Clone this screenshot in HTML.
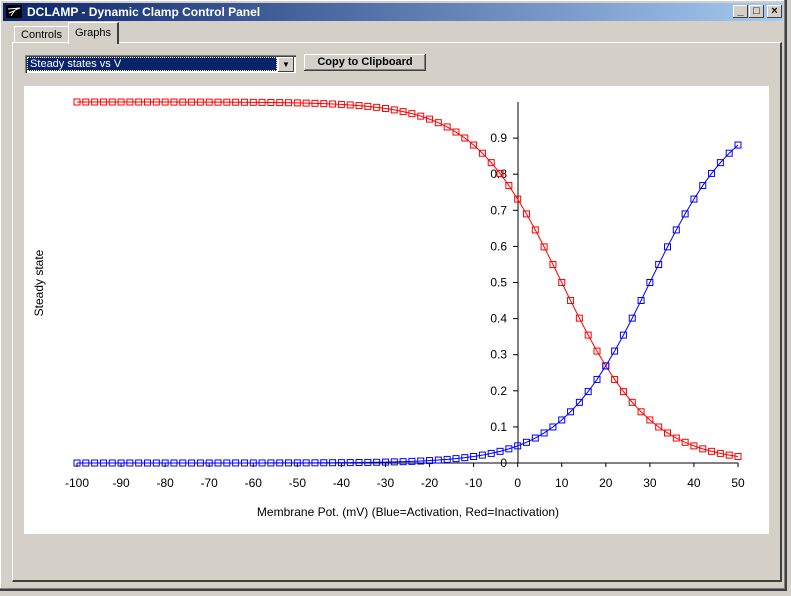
<!DOCTYPE html>
<html><head><meta charset="utf-8"><style>
body{margin:0;width:791px;height:596px;background:#d4d0c8;position:relative;overflow:hidden;font-family:"Liberation Sans",sans-serif;}
.abs{position:absolute}
#win{left:0;top:0;width:785px;height:589px;border-right:2px solid #404040;border-bottom:2px solid #404040;box-shadow:inset -1px -1px 0 #808080, inset 1px 1px 0 #fff;}
#title{left:3px;top:3px;width:780px;height:18px;background:linear-gradient(to right,#0a246a,#a6caf0);color:#fff;font-weight:bold;font-size:12px;line-height:18px;}
.tb{top:5px;width:15px;height:13px;background:#d4d0c8;box-shadow:inset -1px -1px 0 #404040,inset 1px 1px 0 #fff;font-size:11px;text-align:center;line-height:13px;color:#000;font-weight:bold}
#panel{left:12px;top:42px;width:767px;height:537px;border-left:1px solid #fff;border-top:1px solid #fff;border-right:2px solid #404040;border-bottom:2px solid #404040;}
.tab{font-size:11px;color:#000;}
</style></head><body>
<div id="win" class="abs"></div>
<div id="title" class="abs"><span style="position:absolute;left:3px;top:2px;width:16px;height:13px;background:#000"><svg width="16" height="13"><path d="M2 4 L14 3 L9 5 L5 11 M3 8 L8 6" stroke="#fff" fill="none"/></svg></span><span style="position:absolute;left:24px">DCLAMP - Dynamic Clamp Control Panel</span></div>
<div class="abs tb" style="left:733px">_</div>
<div class="abs tb" style="left:749px">□</div>
<div class="abs tb" style="left:767px">×</div>
<div id="panel" class="abs"></div>
<div class="abs tab" style="left:14px;top:26px;width:53px;height:16px;border-left:1px solid #fff;border-top:1px solid #fff;border-right:1px solid #404040;line-height:16px;text-align:center">Controls</div>
<div class="abs tab" style="left:68px;top:22px;width:48px;height:21px;background:#d4d0c8;border-left:1px solid #fff;border-top:1px solid #fff;border-right:2px solid #404040;line-height:20px;text-align:center">Graphs</div>
<div class="abs" style="left:25px;top:55px;width:271px;height:18px;background:#fff;box-shadow:inset 1px 1px 0 #808080,inset 2px 2px 0 #404040"></div>
<div class="abs" style="left:27px;top:57px;width:250px;height:14px;background:#0a246a;color:#fff;font-size:11px;line-height:14px;outline:1px dotted #fff;outline-offset:-1px">&nbsp;Steady states vs V</div>
<div class="abs" style="left:278px;top:57px;width:16px;height:15px;background:#d4d0c8;box-shadow:inset -1px -1px 0 #404040,inset 1px 1px 0 #fff;text-align:center;font-size:8px;line-height:15px">▼</div>
<div class="abs" style="left:304px;top:54px;width:122px;height:17px;background:#d4d0c8;box-shadow:inset -1px -1px 0 #404040,inset 1px 1px 0 #fff,inset -2px -2px 0 #808080;font-size:11px;font-weight:bold;text-align:center;line-height:16px">Copy to Clipboard</div>
<svg class="abs" style="left:0;top:0" width="791" height="596" id="s">
<rect x="24" y="86" width="745" height="448" fill="#fff"/>
<g id="g" font-family="Liberation Sans,sans-serif" font-size="12" fill="#000"></g>
</svg>
<script>
var g=document.getElementById('g'),h='';
function X(v){return 77+(v+100)*4.4067}function Y(p){return 463-p*361}
h+='<line x1="77" y1="463" x2="738" y2="463" stroke="#000"/><line x1="518" y1="102" x2="518" y2="463" stroke="#000"/>';
for(var v=-100;v<=50;v+=10){var x=X(v);h+='<line x1="'+x+'" y1="463" x2="'+x+'" y2="467" stroke="#000"/><text x="'+x+'" y="487" text-anchor="middle">'+v+'</text>';}
for(var i=0;i<=9;i++){var y=Y(i/10);h+='<line x1="513" y1="'+y+'" x2="518" y2="'+y+'" stroke="#000"/><text x="507" y="'+(y+4)+'" text-anchor="end">'+(i==0?'0':(i/10).toFixed(1))+'</text>';}
h+='<text x="408" y="516" text-anchor="middle">Membrane Pot. (mV) (Blue=Activation, Red=Inactivation)</text>';
h+='<text transform="translate(43,283) rotate(-90)" text-anchor="middle">Steady state</text>';
var pb='',pr='',mb='',mr='';
for(var v=-100;v<=50;v+=2){var x=X(v),b=1/(1+Math.exp(-(v-30)/10)),r=1/(1+Math.exp((v-10)/10));
pb+=x+','+Y(b)+' ';pr+=x+','+Y(r)+' ';
mb+='<rect x="'+(x-3)+'" y="'+(Y(b)-3)+'" width="6" height="6"/>';mr+='<rect x="'+(x-3)+'" y="'+(Y(r)-3)+'" width="6" height="6"/>';}
h+='<polyline points="'+pr+'" fill="none" stroke="red"/><polyline points="'+pb+'" fill="none" stroke="blue"/>';
h+='<g fill="none" stroke="red">'+mr+'</g><g fill="none" stroke="blue">'+mb+'</g>';
g.innerHTML=h;
</script>
</body></html>
